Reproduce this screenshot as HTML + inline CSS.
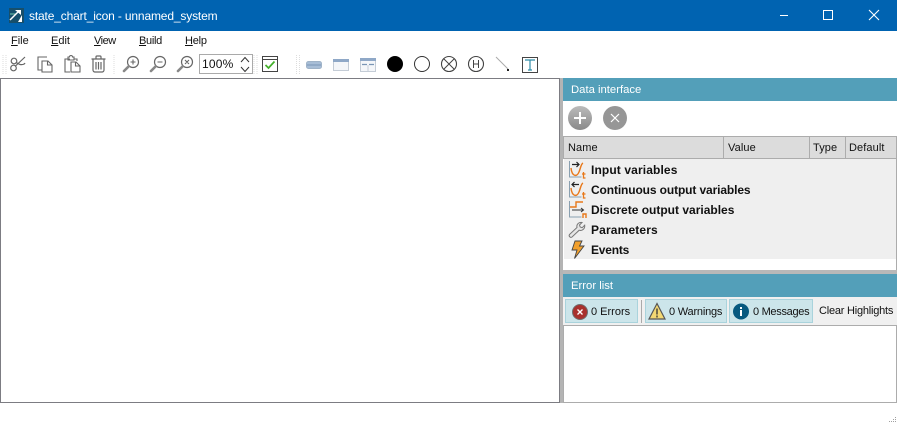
<!DOCTYPE html>
<html><head><meta charset="utf-8"><style>
html,body{margin:0;padding:0;background:#fff}
body{width:897px;height:423px;overflow:hidden;position:relative;font:11px "Liberation Sans",sans-serif;color:#111}
.a{position:absolute}
.t{position:absolute;white-space:nowrap;line-height:14px}
.b{font-weight:bold;font-size:12px}
u{text-decoration:underline}
svg{position:absolute;overflow:visible}
.hd{position:absolute;left:563px;width:334px;height:23px;background:#539fb9;color:#fff;line-height:24px;text-indent:8px;font-size:11.3px}
.btn{position:absolute;top:299px;height:22px;background:#cce5ea;border:1px solid #a9d3dc}
.th{position:absolute;top:141px;letter-spacing:.1px}
</style></head><body>
<div class="a" style="left:0;top:0;width:897px;height:31px;background:#0063b1"></div>
<svg style="left:9px;top:8px" width="15" height="15" viewBox="0 0 15 15"><rect width="15" height="15" fill="#174f6b"/><path d="M1 6h6" stroke="#9fc" stroke-width="1" opacity=".7"/><path d="M1 12L10 3" stroke="#fff" stroke-width="1.500"/><path d="M6 2h6v5z" fill="#fff"/><path d="M9 14l4-7v7z" fill="#fff"/></svg>
<div class="t" style="left:29px;top:9px;color:#fff;font-size:12px;letter-spacing:-.15px">state_chart_icon - unnamed_system</div>
<div class="a" style="left:780px;top:15px;width:8px;height:1px;background:#fff"></div>
<div class="a" style="left:823px;top:10px;width:8px;height:8px;border:1px solid #fff"></div>
<svg style="left:869px;top:10px" width="10" height="10"><path d="M0 0L10 10M10 0L0 10" stroke="#fff" stroke-width="1.100"/></svg>

<div class="t" style="left:11px;top:34px"><u>F</u>ile</div>
<div class="t" style="left:51px;top:34px"><u>E</u>dit</div>
<div class="t" style="left:94px;top:34px;letter-spacing:-.5px"><u>V</u>iew</div>
<div class="t" style="left:139px;top:34px;letter-spacing:-.3px"><u>B</u>uild</div>
<div class="t" style="left:185px;top:34px;letter-spacing:-.2px"><u>H</u>elp</div>

<svg style="left:0;top:52px" width="560" height="26" fill="none" stroke="#666">
<path d="M3 3v20M6 3v20M296.500 3v20M299.500 3v20M254 3v20M257 3v20M114 3v20" stroke="#ddd" stroke-dasharray="1 1"/>
<g stroke-width="1.200"><circle cx="13.500" cy="16" r="2.800"/><circle cx="14" cy="9" r="2.800"/><path d="M15.500 14L25 5M16 10.500L20 12.500Q24 13 25 11"/></g>
<path d="M47 5H38v13h4M42 9h6l4 4v7H42zM47.500 9v4h4.500" stroke-width="1.100"/>
<path d="M70 7h-5v13h5M74 7h3v2M68 7V5h1.500a1.500 1.500 0 0 1 3 0H74v3h-6zM71 10h5l4 4v6H71zM75.500 10v4h4.500" stroke-width="1.100"/>
<path d="M91.500 7h14M96 7V5a1 1 0 0 1 1-1h3a1 1 0 0 1 1 1v2M93 7v11a2 2 0 0 0 2 2h7a2 2 0 0 0 2-2V7M96 10v7.500M98.500 10v7.500M101 10v7.500" stroke-width="1.200"/>
<g stroke-width="1.200"><circle cx="133" cy="10" r="5.500"/><circle cx="160" cy="10" r="5.500"/><circle cx="187" cy="10" r="5.500"/></g>
<path d="M128.500 14.500l-4.500 4.500M155.500 14.500l-4.500 4.500M182.500 14.500l-4.500 4.500" stroke-width="2.600" stroke="#888" stroke-linecap="round"/>
<path d="M130.500 10h5M133 7.500v5M157.500 10h5M185 8l4 4M189 8l-4 4" stroke-width="1.100"/>
<rect x="199.500" y="2.500" width="53" height="19" fill="#fff" stroke="#aaa"/>
<path d="M241 10l4-4.500 4 4.500M241 15l4 4.500 4-4.500" stroke="#333"/>
<rect x="262.500" y="4.500" width="15" height="15" fill="#fff" stroke="#444"/><path d="M263 7.500h14" stroke="#444"/><path d="M265.500 13l3 3 6-6.500" stroke="#43b02a" stroke-width="1.700"/>
<rect x="306.500" y="9.500" width="15" height="7" rx="2" fill="#a7bdd6" stroke="#9fb3c8"/><path d="M307 13h14" stroke="#7a95b5"/>
<rect x="333.500" y="7.500" width="15" height="11" fill="#f4f6f9" stroke="#c4ccd6"/><rect x="333" y="7" width="16" height="3" fill="#8fa8c7" stroke="none"/>
<rect x="360.500" y="6.500" width="15" height="13" fill="#f4f6f9" stroke="#c4ccd6"/><rect x="360" y="6" width="16" height="3" fill="#8fa8c7" stroke="none"/><path d="M362 12.500h5M369 12.500h5" stroke="#7a95b5" stroke-width="1.200"/><path d="M368 13v6" stroke="#c4ccd6"/>
<circle cx="395" cy="12" r="8" fill="#000" stroke="none"/>
<circle cx="422" cy="12" r="7.500" stroke="#333"/>
<circle cx="449" cy="12" r="7.500" stroke="#444" stroke-width="1.100"/><path d="M444 7l10 10M454 7l-10 10" stroke="#444"/>
<circle cx="476" cy="12" r="7.500" stroke="#444" stroke-width="1.100"/><path d="M473.500 8v8M478.500 8v8M473.500 12h5" stroke="#444"/>
<path d="M496 5l12 12" stroke="#aaa"/><rect x="507" y="17" width="2" height="2" fill="#222" stroke="none"/>
<rect x="522.500" y="5.500" width="15" height="15" stroke="#444"/><path d="M525 8h10M530 8v10M528 18h4" stroke="#2f8ca8" stroke-width="1.200"/>
</svg>
<div class="t" style="left:202px;top:57px;font-size:12px;letter-spacing:.2px">100%</div>

<div class="a" style="left:0;top:78px;width:558px;height:323px;border:1px solid #7c7c82;background:#fff"></div>
<div class="a" style="left:560px;top:78px;width:3px;height:325px;background:#b4b4b4"></div>

<div class="hd" style="top:78px">Data interface</div>
<svg style="left:568px;top:106px" width="60" height="24"><defs><linearGradient id="g" x1="0" y1="0" x2="0" y2="1"><stop offset="0" stop-color="#bbb"/><stop offset="1" stop-color="#8a8a8a"/></linearGradient></defs><circle cx="12" cy="12" r="12" fill="url(#g)"/><path d="M12 6v12M6 12h12" stroke="#fff" stroke-width="2"/><circle cx="47" cy="12" r="12" fill="#969696"/><path d="M43 8l8 8M51 8l-8 8" stroke="#fff" stroke-width="1.200"/></svg>

<div class="a" style="left:563px;top:136px;width:332px;height:21px;background:#dcdcdc;border:1px solid #acacac"></div>
<div class="a" style="left:723px;top:136px;width:1px;height:22px;background:#acacac"></div>
<div class="a" style="left:809px;top:136px;width:1px;height:22px;background:#acacac"></div>
<div class="a" style="left:845px;top:136px;width:1px;height:22px;background:#acacac"></div>
<div class="t th" style="left:568px">Name</div>
<div class="t th" style="left:728px">Value</div>
<div class="t th" style="left:813px">Type</div>
<div class="t th" style="left:849px">Default</div>
<div class="a" style="left:564px;top:159px;width:332px;height:100px;background:#efefef"></div>

<svg style="left:568px;top:160px" width="20" height="100" fill="none">
<path d="M1.500 1v16h12" stroke="#8aa0b0"/><path d="M4 4.500h7M8.500 2L11 4.500 8.500 7" stroke="#222" stroke-width="1.200"/><path d="M3 8c1 9 6 9 8 4s2-8 4-9" stroke="#e8781a" stroke-width="1.400"/><path d="M15.500 12v6h2M14 14h3.500" stroke="#e8781a" stroke-width="1.300"/>
<path d="M1.500 21v16h12" stroke="#8aa0b0"/><path d="M11 24.500H4M6.500 22L4 24.500 6.500 27" stroke="#222" stroke-width="1.200"/><path d="M3 28c1 9 6 9 8 4s2-8 4-9" stroke="#e8781a" stroke-width="1.400"/><path d="M15.500 32v6h2M14 34h3.500" stroke="#e8781a" stroke-width="1.300"/>
<path d="M1.500 41v16h12" stroke="#8aa0b0"/><path d="M2 47h6v-5h7" stroke="#e8781a" stroke-width="1.400"/><path d="M4 50h11M13 48l2.500 2-2.500 2" stroke="#333"/><path d="M15 58v-4h3v4" stroke="#e8781a" stroke-width="1.400"/>
<path d="M1.500 74.500l7.500-7c-.7-3 1.500-5.500 5-5l-2.500 2.500.7 2 2 .7 2.500-2.500c.5 3.500-2.500 6-5.500 5L4 77a1.800 1.800 0 0 1-2.500-2.500z" fill="#e6e6e6" stroke="#777" stroke-width="1"/>
<path d="M7 81h7l-2.500 5H16L6.500 98.500 9 90H4z" fill="#f2a02c" stroke="#444" stroke-width=".9"/>
</svg>
<div class="t b" style="left:591px;top:163px;letter-spacing:.12px">Input variables</div>
<div class="t b" style="left:591px;top:183px;letter-spacing:-.12px">Continuous output variables</div>
<div class="t b" style="left:591px;top:203px">Discrete output variables</div>
<div class="t b" style="left:591px;top:223px;letter-spacing:.15px">Parameters</div>
<div class="t b" style="left:591px;top:243px;letter-spacing:-.2px">Events</div>

<div class="a" style="left:563px;top:270px;width:334px;height:4px;background:#b8b8b8"></div>
<div class="a" style="left:896px;top:136px;width:1px;height:134px;background:#acacac"></div>
<div class="hd" style="top:274px">Error list</div>
<div class="a" style="left:563px;top:297px;width:334px;height:28px;background:#f0f0f0"></div>
<div class="btn" style="left:565px;width:71px"></div>
<div class="a" style="left:641px;top:300px;width:1px;height:23px;background:#aaa"></div>
<div class="btn" style="left:645px;width:80px"></div>
<div class="btn" style="left:729px;width:82px"></div>
<svg style="left:570px;top:302px" width="190" height="20">
<circle cx="10" cy="10" r="7.500" fill="#a8312d" stroke="#6e6e6e"/><path d="M7.500 7.500l5 5M12.500 7.500l-5 5" stroke="#fff" stroke-width="1.400"/>
<path d="M87 1.500L95 17H79z" fill="#f3d873" stroke="#555" stroke-width="1.200"/><path d="M87 6.500v6M87 13.500v2" stroke="#333" stroke-width="1.300"/>
<circle cx="171" cy="9.500" r="8" fill="#07597f"/><path d="M171 8v6M171 5v2" stroke="#fff" stroke-width="2"/>
</svg>
<div class="t" style="left:591px;top:305px">0 Errors</div>
<div class="t" style="left:669px;top:305px;letter-spacing:-.2px">0 Warnings</div>
<div class="t" style="left:753px;top:305px;letter-spacing:-.3px">0 Messages</div>
<div class="t" style="left:819px;top:304px;letter-spacing:-.22px">Clear Highlights</div>
<div class="a" style="left:563px;top:325px;width:332px;height:76px;background:#fff;border:1px solid #acacac"></div>
<svg style="left:889px;top:417px" width="8" height="6" fill="#a0a0a0"><rect x="6" y="0" width="1" height="1"/><rect x="4" y="2" width="1" height="1"/><rect x="6" y="2" width="1" height="1"/><rect x="2" y="4" width="1" height="1"/><rect x="4" y="4" width="1" height="1"/><rect x="6" y="4" width="1" height="1"/><rect x="0" y="4" width="1" height="1"/></svg>
</body></html>
